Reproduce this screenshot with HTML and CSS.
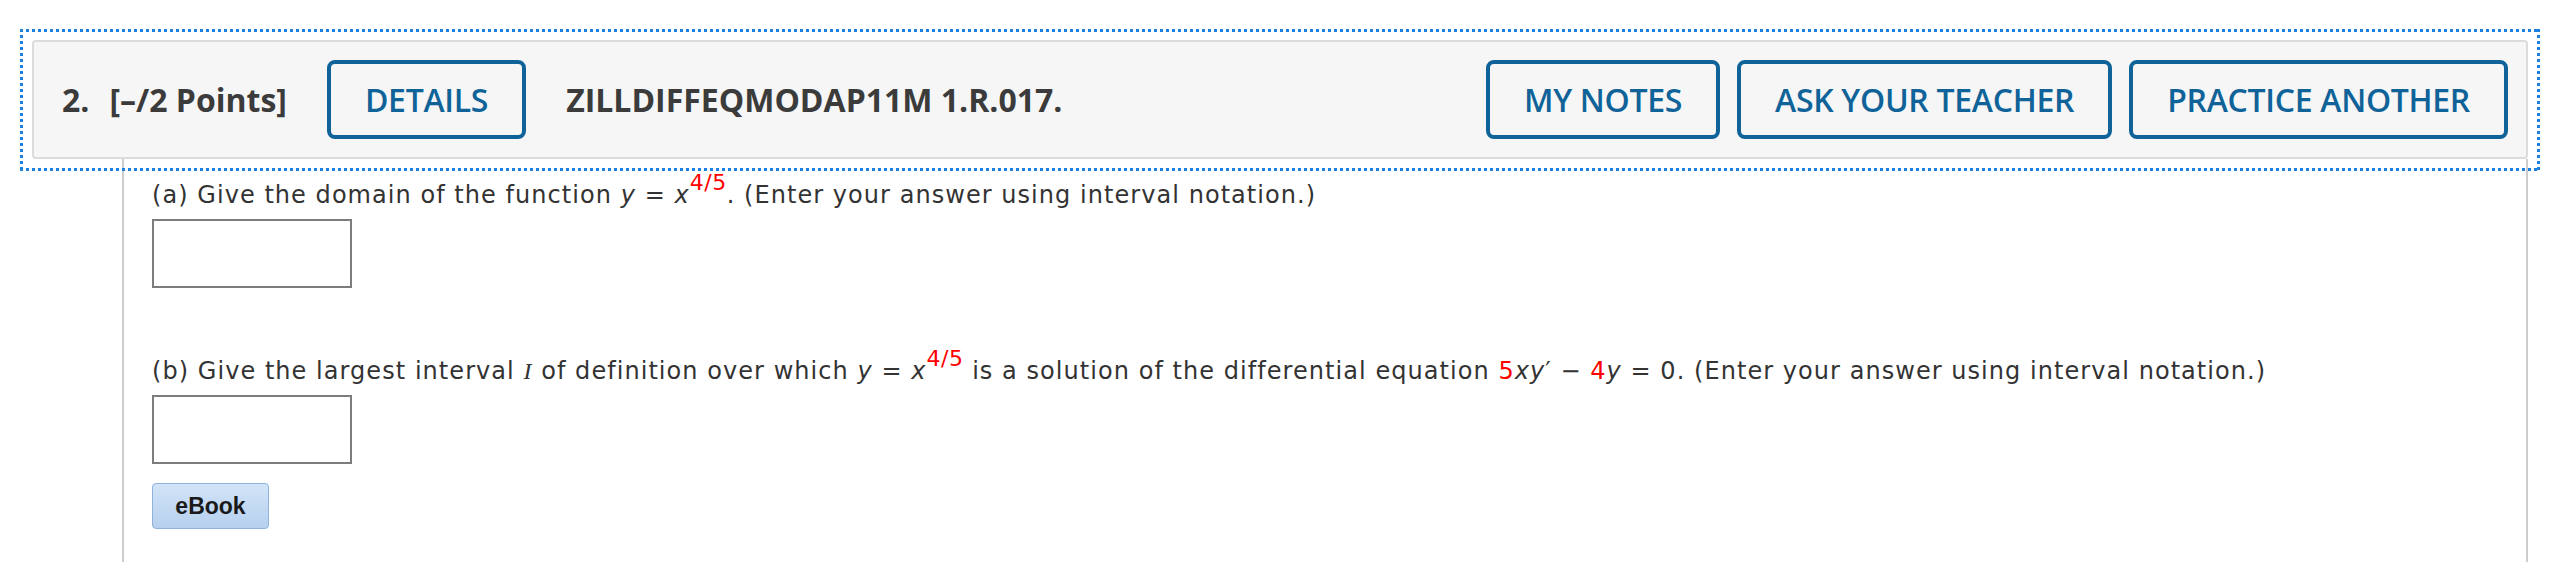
FILE: index.html
```html
<!DOCTYPE html>
<html>
<head>
  <title>Question 2</title>
  <link rel="stylesheet" href="styles.css">
</head>
<body>

  <div class="page">
    <div class="q-header">
      <span class="q-num">2.</span>
      <span class="q-points">[&ndash;/2 Points]</span>
      <button class="q-btn">DETAILS</button>
      <span class="q-title">ZILLDIFFEQMODAP11M 1.R.017.</span>
      <div class="q-actions">
        <button class="q-btn">MY NOTES</button>
        <button class="q-btn">ASK YOUR TEACHER</button>
        <button class="q-btn">PRACTICE ANOTHER</button>
      </div>
    </div>

    <div class="q-body">
      <p class="part">(a) Give the domain of the function <i>y</i> = <i>x</i><sup class="red">4/5</sup>. (Enter your answer using interval notation.)</p>
      <input class="answer" type="text">

      <p class="part part-b">(b) Give the largest interval <i class="serif">I</i> of definition over which <i>y</i> = <i>x</i><sup class="red">4/5</sup> is a solution of the differential equation <span class="red">5</span><i>xy</i>&prime; &minus; <span class="red">4</span><i>y</i> = 0. (Enter your answer using interval notation.)</p>
      <input class="answer" type="text">

      <button class="ebook">eBook</button>
    </div>
  </div>

</body>
</html>
```

FILE: styles.css
```css
html, body {
  margin: 0;
  overflow: hidden;
  background: #fff;
}
.page {
  height: 562px;
  box-sizing: border-box;
  padding: 40px 32px 0 32px;
  display: flex;
  flex-direction: column;
}
.q-header {
  position: relative;
  display: flex;
  align-items: center;
  gap: 40px;
  padding: 18px 18px 18px 28px;
  background: #f6f6f6;
  border: 2px solid #dcdcdc;
  border-radius: 4px;
  font-family: "Open Sans", sans-serif;
  font-size: 32px;
  color: #3b3b3b;
}
/* focus ring, square dots */
.q-header::after {
  content: "";
  position: absolute;
  top: -13px;
  left: -14px;
  right: -14px;
  bottom: -14px;
  pointer-events: none;
  background:
    linear-gradient(90deg, #1b80e2 50%, transparent 50%) top left / 6px 3px repeat-x,
    linear-gradient(90deg, #1b80e2 50%, transparent 50%) bottom left / 6px 3px repeat-x,
    linear-gradient(#1b80e2 50%, transparent 50%) top left / 3px 6px repeat-y,
    linear-gradient(#1b80e2 50%, transparent 50%) top right / 3px 6px repeat-y;
}
.q-num, .q-points, .q-title {
  font-weight: 700;
}
.q-num {
  margin-right: -20px;
}
.q-btn {
  height: 79px;
  padding: 0 34px;
  border: 4px solid #0f6398;
  border-radius: 8px;
  background: #f6f6f6;
  color: #0f6398;
  font-family: "Open Sans", sans-serif;
  font-size: 32px;
  font-weight: 600;
  letter-spacing: -0.3px;
}
.q-actions {
  margin-left: auto;
  display: flex;
  gap: 17px;
}
.q-body {
  flex: 1;
  margin-left: 90px;
  border-left: 2px solid #cccccc;
  border-right: 2px solid #cccccc;
  padding: 20px 28px 0 28px;
  font-family: Verdana, "DejaVu Sans", sans-serif;
  font-size: 24px;
  letter-spacing: 1.05px;
  color: #333;
}
.part {
  margin: 0;
  line-height: 32px;
}
.part-b {
  margin-top: 67px;
}
.serif {
  font-family: "Liberation Serif", serif;
}
.red {
  color: #f00;
}
sup {
  font-size: 22px;
  letter-spacing: 0.5px;
  line-height: 0;
  vertical-align: 13px;
}
.answer {
  display: block;
  box-sizing: border-box;
  width: 200px;
  height: 69px;
  margin-top: 8px;
  border: 2px solid #7c7c7c;
  background: #fff;
}
.ebook {
  display: block;
  margin-top: 19px;
  width: 117px;
  height: 46px;
  border: 1px solid #8fb2da;
  border-radius: 4px;
  background: linear-gradient(#d2e4f8, #b6d0ee);
  font-family: "Liberation Sans", Arial, sans-serif;
  font-size: 23px;
  font-weight: 700;
  letter-spacing: 0;
  color: #1a1a1a;
}
```
